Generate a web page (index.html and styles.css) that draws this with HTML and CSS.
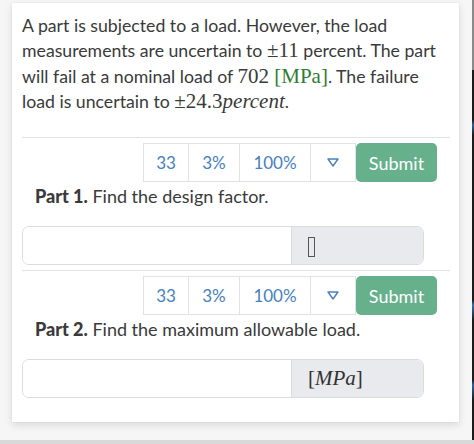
FILE: index.html
```html
<!DOCTYPE html>
<html>
<head>
<meta charset="utf-8">
<link rel="stylesheet" href="styles.css">
</head>
<body>
<div class="page">
  <div class="card">
    <p class="question">A part is subjected to a load. However, the load measurements are uncertain to <span class="m">±11</span> percent. The part will fail at a nominal load of <span class="m">702 <span class="unit">[MPa]</span></span>. The failure load is uncertain to <span class="m">±24.3<i>percent</i></span>.</p>
    <div class="part first">
      <div class="toolbar">
        <div class="seg">
          <span class="cell c1">33</span>
          <span class="cell c2">3%</span>
          <span class="cell c3">100%</span>
          <span class="cell c4"><svg width="12" height="9" viewBox="0 0 12 9"><path d="M1 1 H11 L6 8 Z" fill="none" stroke="#4a7fc1" stroke-width="1.4" stroke-linejoin="round"/></svg></span>
        </div>
        <button class="submit">Submit</button>
      </div>
      <div class="prompt"><b>Part 1.</b> Find the design factor.</div>
      <div class="answer">
        <div class="field"></div>
        <div class="addon"><span class="box"></span></div>
      </div>
    </div>
    <div class="part">
      <div class="toolbar">
        <div class="seg">
          <span class="cell c1">33</span>
          <span class="cell c2">3%</span>
          <span class="cell c3">100%</span>
          <span class="cell c4"><svg width="12" height="9" viewBox="0 0 12 9"><path d="M1 1 H11 L6 8 Z" fill="none" stroke="#4a7fc1" stroke-width="1.4" stroke-linejoin="round"/></svg></span>
        </div>
        <button class="submit">Submit</button>
      </div>
      <div class="prompt"><b>Part 2.</b> Find the maximum allowable load.</div>
      <div class="answer">
        <div class="field"></div>
        <div class="addon"><span class="mu">[<i>MPa</i>]</span></div>
      </div>
    </div>
  </div>
  <div class="edge"></div>
</div>
<div class="bottom"></div>
</body>
</html>
```
FILE: styles.css
```css
* { box-sizing: border-box; }
html, body { margin: 0; padding: 0; }
body {
  width: 474px;
  height: 444px;
  overflow: hidden;
  background: #f6f6f6;
  font-family: Lato, "Open Sans", sans-serif;
  color: #3a3a3a;
  position: relative;
}
.page {
  display: flex;
  padding: 3px 0 0 12px;
  height: 440px;
}
.card {
  width: 447px;
  height: 419px;
  background: #fff;
  box-shadow: 0 3px 8px rgba(0,0,0,0.12), 0 0 1px rgba(0,0,0,0.15);
  padding: 10px 9px 0 10px;
}
.edge {
  position: absolute;
  right: 0;
  top: 0;
  width: 2px;
  height: 444px;
  background: linear-gradient(#8a8a8a 0, #8a8a8a 70px, #1c1c1c 70px, #1c1c1c 120px, #2f5f9a 125px, #1c1c1c 135px, #1c1c1c 300px, #3a6fae 305px, #1c1c1c 320px, #1c1c1c 380px, #2d62a5 385px, #1c1c1c 400px);
}
.bottom {
  position: absolute;
  left: 0;
  bottom: 0;
  width: 100%;
  height: 4px;
  background: #d9d9d9;
}
.question {
  margin: 0;
  font-size: 17.7px;
  line-height: 25.3px;
  height: 101px;
  color: #3a3a3a;
}
.m {
  font-family: "Liberation Serif", "DejaVu Serif", serif;
  font-size: 21px;
  line-height: 1;
}
.unit { color: #2e7d32; }
.part {
  border-top: 1px solid #e3e3e3;
  padding-top: 5px;
}
.part.first { margin-top: 23px; }
.toolbar {
  display: flex;
  justify-content: flex-end;
  padding-right: 13px;
}
.seg {
  display: flex;
  border: 1px solid #e2e2e2;
  height: 39px;
}
.cell {
  display: flex;
  align-items: center;
  justify-content: center;
  color: #4680c2;
  font-size: 17px;
  border-left: 1px solid #e2e2e2;
}
.cell.c1 { border-left: none; width: 44px; }
.cell.c2 { width: 51px; }
.cell.c3 { width: 71px; }
.cell.c4 { width: 45px; }
.submit {
  width: 81px;
  height: 39px;
  border: none;
  border-radius: 5px;
  background: #66b18c;
  color: #fff;
  font-family: Lato, "Open Sans", sans-serif;
  font-size: 18px;
  padding: 0;
}
.prompt {
  font-size: 18px;
  padding-left: 13px;
  margin-top: 3px;
  line-height: 22px;
  color: #3a3a3a;
}
.prompt b { font-weight: 900; }
.answer {
  display: flex;
  margin: 19px 26px 5px 0;
  height: 39px;
  border: 1px solid #dcdcdc;
  border-radius: 7px;
  overflow: hidden;
}
.field { width: 268px; background: #fff; }
.addon {
  flex: 1;
  background: #e9eaee;
  border-left: 1px solid #dcdcdc;
  display: flex;
  align-items: center;
  padding-left: 16px;
}
.box {
  width: 7px;
  height: 20px;
  border: 1.5px solid #555;
  margin-top: 2px;
}
.mu {
  font-family: "Liberation Serif", "DejaVu Serif", serif;
  font-size: 21px;
  color: #333;
}
```
